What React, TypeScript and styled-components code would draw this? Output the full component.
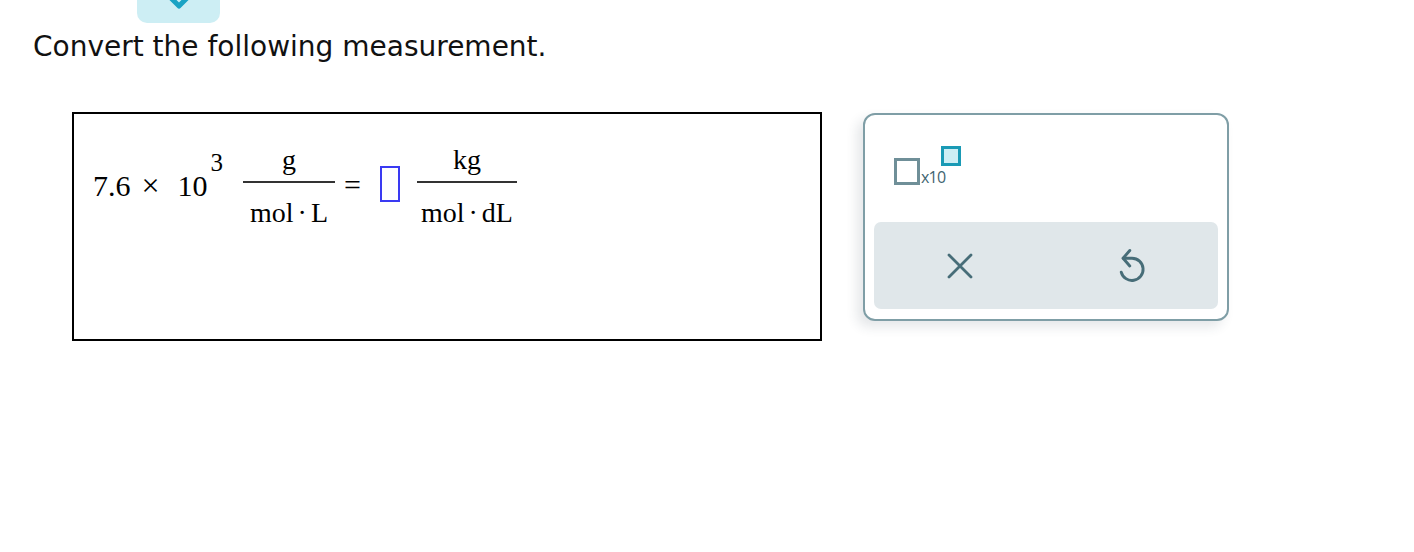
import styled, { createGlobalStyle } from "styled-components";

const GlobalStyle = createGlobalStyle`
  html, body {
    margin: 0;
    padding: 0;
    background: #ffffff;
  }
  body {
    font-family: "DejaVu Sans", Verdana, sans-serif;
    color: #000;
  }
`;

const Page = styled.div`
  display: flex;
  flex-direction: column;
  width: 1414px;
  height: 552px;
  overflow: hidden;
`;

const TopTab = styled.div`
  margin-left: 137px;
  width: 83px;
  height: 23px;
  border-radius: 0 0 10px 10px;
  background: #cdeef4;
  display: flex;
  justify-content: center;
  align-items: flex-start;
`;

const Heading = styled.h1`
  margin: 8px 0 0;
  padding-left: 33px;
  font-family: "DejaVu Sans", Verdana, sans-serif;
  font-weight: normal;
  font-size: 28px;
  line-height: 32px;
  color: #111;
`;

const Workspace = styled.div`
  display: flex;
  align-items: flex-start;
  margin: 49px 0 0 72px;
  gap: 41px;
`;

const ProblemBox = styled.div`
  box-sizing: border-box;
  width: 750px;
  height: 229px;
  border: 2px solid #000;
  padding: 30px 0 0 19px;
`;

const MathRow = styled.div`
  display: flex;
  align-items: flex-start;
  font-family: "Liberation Serif", "Times New Roman", serif;
  color: #000;
`;

const MathText = styled.span<{ $size?: number; $top?: number; $left?: number }>`
  font-size: ${(p) => p.$size ?? 30}px;
  line-height: ${(p) => (p.$size ?? 30) + 4}px;
  margin-top: ${(p) => p.$top ?? 0}px;
  margin-left: ${(p) => p.$left ?? 0}px;
  white-space: pre;
`;

const Fraction = styled.div<{ $width: number; $left: number }>`
  display: flex;
  flex-direction: column;
  align-items: center;
  width: ${(p) => p.$width}px;
  margin-left: ${(p) => p.$left}px;
  font-size: 28px;
  line-height: 31px;
`;

const Numerator = styled.div`
  padding-bottom: 6px;
`;

const FractionBar = styled.div`
  align-self: stretch;
  height: 2px;
  background: #333;
`;

const Denominator = styled.div`
  padding-top: 14px;
`;

const Dot = styled.span`
  margin: 0 4px;
`;

const AnswerSlot = styled.div`
  box-sizing: border-box;
  width: 20px;
  height: 36px;
  margin: 22px 0 0 19px;
  border: 2px solid #3a3af2;
`;

const Keypad = styled.div`
  box-sizing: border-box;
  width: 366px;
  height: 208px;
  margin-top: 1px;
  border: 2px solid #7f9ea6;
  border-radius: 12px;
  background: #fff;
  box-shadow: -6px 6px 12px rgba(40, 60, 70, 0.12);
  display: flex;
  flex-direction: column;
`;

const KeyArea = styled.div`
  flex: 1;
  padding: 31px 0 0 29px;
`;

const PowerKey = styled.button`
  display: flex;
  align-items: flex-start;
  padding: 0;
  border: none;
  background: transparent;
  cursor: pointer;
`;

const Slot = styled.span<{ $w: number; $h: number; $accent?: boolean; $top?: number; $left?: number }>`
  display: block;
  box-sizing: border-box;
  width: ${(p) => p.$w}px;
  height: ${(p) => p.$h}px;
  margin-top: ${(p) => p.$top ?? 0}px;
  margin-left: ${(p) => p.$left ?? 0}px;
  border: 3px solid ${(p) => (p.$accent ? "#1a9ab5" : "#6f8f98")};
  background: ${(p) => (p.$accent ? "#cdeef4" : "#fff")};
`;

const PowerStack = styled.span`
  display: flex;
  flex-direction: column;
  align-items: flex-start;
  margin-left: 1px;
`;

const PowerLabel = styled.span`
  font-family: "Open Sans", Lato, sans-serif;
  font-size: 16px;
  font-weight: 500;
  line-height: 18px;
  margin-top: 2px;
  color: #3f6571;
  letter-spacing: -0.8px;
`;

const ActionBar = styled.div`
  height: 87px;
  margin: 0 9px 10px;
  border-radius: 7px;
  background: #e0e7ea;
  display: grid;
  grid-template-columns: 1fr 1fr;
`;

const ActionButton = styled.button`
  display: flex;
  align-items: center;
  justify-content: center;
  border: none;
  background: transparent;
  padding: 0;
  cursor: pointer;
  color: #476d78;
`;

function ChevronPeek() {
  return (
    <svg width="30" height="10" viewBox="0 0 30 10">
      <polyline
        points="4,-5 15,6 26,-5"
        fill="none"
        stroke="#1aa3c4"
        strokeWidth="5"
        strokeLinejoin="round"
      />
    </svg>
  );
}

function CloseIcon() {
  return (
    <svg width="28" height="28" viewBox="0 0 28 28">
      <path
        d="M3 3 L25 25 M25 3 L3 25"
        stroke="currentColor"
        strokeWidth="2.8"
        strokeLinecap="round"
      />
    </svg>
  );
}

function UndoIcon() {
  return (
    <svg width="40" height="40" viewBox="0 0 36 36">
      <path
        d="M10 11 H18 A10 10 0 1 1 8.3 23.5"
        fill="none"
        stroke="currentColor"
        strokeWidth="2.6"
        strokeLinecap="round"
      />
      <path
        d="M16 4 L10 11 L16 18"
        fill="none"
        stroke="currentColor"
        strokeWidth="2.6"
        strokeLinecap="round"
        strokeLinejoin="round"
      />
    </svg>
  );
}

export default function App() {
  return (
    <Page>
      <GlobalStyle />
      <TopTab>
        <ChevronPeek />
      </TopTab>
      <Heading>Convert the following measurement.</Heading>
      <Workspace>
        <ProblemBox>
          <MathRow>
            <MathText $top={25}>7.6</MathText>
            <MathText $size={32} $top={23} $left={11}>×</MathText>
            <MathText $top={25} $left={18}>10</MathText>
            <MathText $size={25} $top={4} $left={3}>3</MathText>
            <Fraction $width={92} $left={20}>
              <Numerator>g</Numerator>
              <FractionBar />
              <Denominator>
                mol<Dot>·</Dot>L
              </Denominator>
            </Fraction>
            <MathText $top={24} $left={9}>=</MathText>
            <AnswerSlot />
            <Fraction $width={100} $left={17}>
              <Numerator>kg</Numerator>
              <FractionBar />
              <Denominator>
                mol<Dot>·</Dot>dL
              </Denominator>
            </Fraction>
          </MathRow>
        </ProblemBox>
        <Keypad>
          <KeyArea>
            <PowerKey aria-label="times ten to the power">
              <Slot $w={26} $h={27} $top={12} />
              <PowerStack>
                <Slot $w={20} $h={20} $accent $left={20} />
                <PowerLabel>x10</PowerLabel>
              </PowerStack>
            </PowerKey>
          </KeyArea>
          <ActionBar>
            <ActionButton aria-label="clear">
              <CloseIcon />
            </ActionButton>
            <ActionButton aria-label="undo">
              <UndoIcon />
            </ActionButton>
          </ActionBar>
        </Keypad>
      </Workspace>
    </Page>
  );
}
